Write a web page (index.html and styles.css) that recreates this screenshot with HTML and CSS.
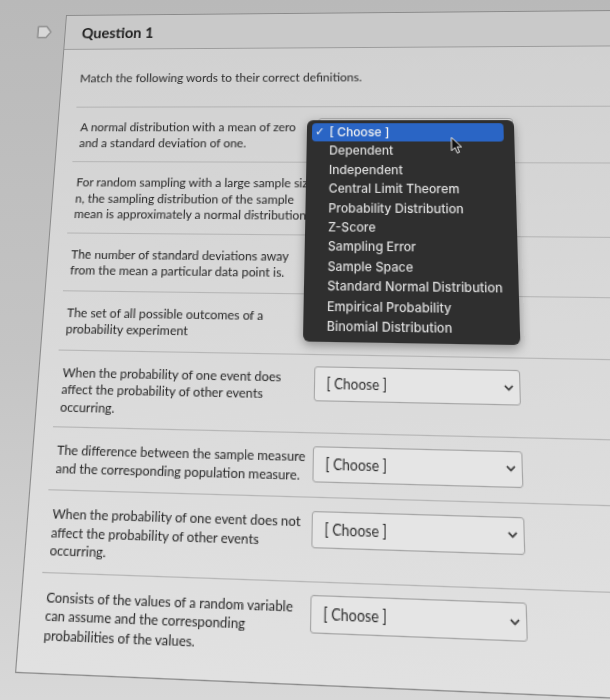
FILE: index.html
```html
<!DOCTYPE html>
<html lang="en">

<head>
    <meta name="viewport" content="width=device-width, initial-scale=1.0" />
    <title>Question 1</title>
    <link rel="stylesheet" href="styles.css">
</head>

<body>
    <div class="screen">
        <div class="gutter">
            <svg class="flag" width="16" height="14" viewBox="0 0 16 14">
                <path d="M1.2 1.2 H10 L14.6 7 L10 12.8 H1.2 Z" fill="#d8d8d8" stroke="#8e8e8e" stroke-width="1.5" stroke-linejoin="round" />
            </svg>
        </div>
        <div class="question">
            <div class="question-header">
                <h2>Question 1</h2>
            </div>
            <div class="question-body">
                <div class="menu">
                    <div class="menu-item selected"><span class="check">✓</span>[ Choose ]</div>
                    <div class="menu-item">Dependent</div>
                    <div class="menu-item">Independent</div>
                    <div class="menu-item">Central Limit Theorem</div>
                    <div class="menu-item">Probability Distribution</div>
                    <div class="menu-item">Z-Score</div>
                    <div class="menu-item">Sampling Error</div>
                    <div class="menu-item">Sample Space</div>
                    <div class="menu-item">Standard Normal Distribution</div>
                    <div class="menu-item">Empirical Probability</div>
                    <div class="menu-item">Binomial Distribution</div>
                    <svg class="cursor" width="12" height="18" viewBox="0 0 12 18">
                        <path d="M1 1 L1 14 L4.2 11 L6.5 16.2 L8.6 15.3 L6.4 10.2 L10.6 10.2 Z" fill="#111" stroke="#eee" stroke-width="1" stroke-linejoin="round" />
                    </svg>
                </div>

                <p class="intro">Match the following words to their correct definitions.</p>

                <div class="match-row">
                    <div class="match-text">A normal distribution with a mean of zero<br>and a standard deviation of one.</div>
                    <div class="select"><span>[ Choose ]</span>
                        <svg width="9" height="6" viewBox="0 0 9 6"><path d="M1 1 L4.5 4.5 L8 1" fill="none" stroke="#333" stroke-width="1.5" /></svg>
                    </div>
                </div>
                <div class="match-row">
                    <div class="match-text">For random sampling with a large sample size<br>n, the sampling distribution of the sample<br>mean is approximately a normal distribution.</div>
                    <div class="select"><span>[ Choose ]</span>
                        <svg width="9" height="6" viewBox="0 0 9 6"><path d="M1 1 L4.5 4.5 L8 1" fill="none" stroke="#333" stroke-width="1.5" /></svg>
                    </div>
                </div>
                <div class="match-row">
                    <div class="match-text">The number of standard deviations away<br>from the mean a particular data point is.</div>
                    <div class="select"><span>[ Choose ]</span>
                        <svg width="9" height="6" viewBox="0 0 9 6"><path d="M1 1 L4.5 4.5 L8 1" fill="none" stroke="#333" stroke-width="1.5" /></svg>
                    </div>
                </div>
                <div class="match-row">
                    <div class="match-text">The set of all possible outcomes of a<br>probability experiment</div>
                    <div class="select"><span>[ Choose ]</span>
                        <svg width="9" height="6" viewBox="0 0 9 6"><path d="M1 1 L4.5 4.5 L8 1" fill="none" stroke="#333" stroke-width="1.5" /></svg>
                    </div>
                </div>
                <div class="match-row">
                    <div class="match-text">When the probability of one event does<br>affect the probability of other events<br>occurring.</div>
                    <div class="select"><span>[ Choose ]</span>
                        <svg width="9" height="6" viewBox="0 0 9 6"><path d="M1 1 L4.5 4.5 L8 1" fill="none" stroke="#333" stroke-width="1.5" /></svg>
                    </div>
                </div>
                <div class="match-row">
                    <div class="match-text">The difference between the sample measure<br>and the corresponding population measure.</div>
                    <div class="select"><span>[ Choose ]</span>
                        <svg width="9" height="6" viewBox="0 0 9 6"><path d="M1 1 L4.5 4.5 L8 1" fill="none" stroke="#333" stroke-width="1.5" /></svg>
                    </div>
                </div>
                <div class="match-row">
                    <div class="match-text">When the probability of one event does not<br>affect the probability of other events<br>occurring.</div>
                    <div class="select"><span>[ Choose ]</span>
                        <svg width="9" height="6" viewBox="0 0 9 6"><path d="M1 1 L4.5 4.5 L8 1" fill="none" stroke="#333" stroke-width="1.5" /></svg>
                    </div>
                </div>
                <div class="match-row">
                    <div class="match-text">Consists of the values of a random variable<br>can assume and the corresponding<br>probabilities of the values.</div>
                    <div class="select"><span>[ Choose ]</span>
                        <svg width="9" height="6" viewBox="0 0 9 6"><path d="M1 1 L4.5 4.5 L8 1" fill="none" stroke="#333" stroke-width="1.5" /></svg>
                    </div>
                </div>
            </div>
        </div>
    </div>
</body>

</html>
```

FILE: styles.css
```css
* {
    padding: 0;
    margin: 0;
    box-sizing: border-box;
    font-family: "Lato", "Liberation Sans", sans-serif;
}

html,
body {
    height: 100%;
}

html {
    background: linear-gradient(#b9b9b9, #c4c4c4 50%, #d8d8d8);
}

body {
    overflow: hidden;
}

/* the photo is taken at an angle: lay out flat, then project */
.screen {
    width: 610px;
    height: 720px;
    display: flex;
    transform-origin: 0 0;
    transform: matrix3d(0.942603, -0.0096626, 0, -0.0000746033,
            -0.086596, 0.924393, 0, -0.0002225698,
            0, 0, 1, 0,
            14.9646, 1.553915, 0, 1);
}

.gutter {
    width: 55px;
    flex: none;
    padding: 24px 0 0 26px;
}

.question {
    width: 600px;
    height: 608px;
    flex: none;
    margin-top: 15px;
    border: 1px solid #8a8a8a;
    border-right: none;
    background: linear-gradient(#d0d0d0, #d9d9d9 50%, #e1e1e1);
}

.question-header {
    height: 36px;
    display: flex;
    align-items: center;
    padding-left: 17px;
    background-color: #c9c9c9;
    border-bottom: 1px solid #9c9c9c;
}

.question-header h2 {
    font-size: 15px;
    font-weight: 700;
    color: #1f1f1f;
}

.question-body {
    position: relative;
    padding: 0 0 0 16.5px;
}

.intro {
    padding: 21.5px 0 21.8px 2px;
    font-size: 12px;
    line-height: 16px;
    color: #2a2a2a;
    border-bottom: 1px solid #b3b3b3;
}

.match-row {
    display: flex;
    align-items: flex-start;
    padding: 12px 0 10px 6px;
    border-bottom: 1px solid #b6b6b6;
}

.match-row:last-child {
    border-bottom: none;
}

.match-text {
    width: 233px;
    flex: none;
    font-size: 11.9px;
    line-height: 15.5px;
    color: #262626;
    white-space: nowrap;
}

.select {
    width: 188px;
    height: 31px;
    margin: -1.5px 0 2.5px 4px;
    display: flex;
    align-items: center;
    justify-content: space-between;
    padding: 0 5px 0 11px;
    font-size: 12.5px;
    color: #2f2f2f;
    background-color: #e5e5e5;
    border: 1px solid #a6a6a6;
    border-radius: 3px;
}

.menu {
    position: absolute;
    z-index: 1;
    left: 249px;
    top: 73px;
    width: 200px;
    height: 210px;
    padding: 3px 5px 5px;
    background-color: #2f2f2f;
    border-radius: 6px;
    box-shadow: 0 3px 10px rgba(0, 0, 0, 0.35);
}

.menu-item {
    position: relative;
    height: 18.4px;
    line-height: 18.4px;
    padding-left: 17px;
    font-family: "Inter", "Noto Sans", sans-serif;
    font-size: 11.8px;
    font-weight: 500;
    color: #dedede;
    white-space: nowrap;
}

.menu-item.selected {
    margin-right: 5px;
    background-color: #2a65c5;
    border-radius: 4px;
    color: #f2f2f2;
}

.check {
    position: absolute;
    left: 3px;
    font-family: "DejaVu Sans", sans-serif;
    font-size: 11px;
}

.cursor {
    position: absolute;
    left: 139px;
    top: 16px;
}
```
